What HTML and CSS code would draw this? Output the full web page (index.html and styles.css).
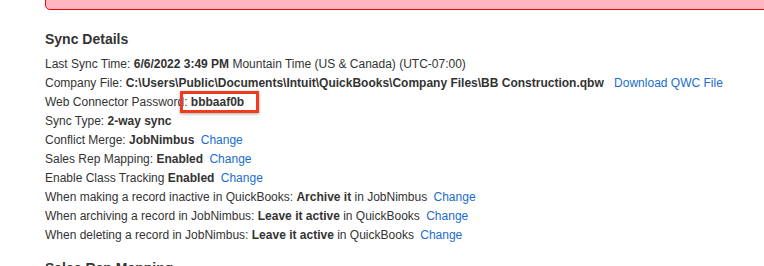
FILE: index.html
```html
<!DOCTYPE html>
<html lang="en">
<head>
  <meta charset="UTF-8">
  <title>QuickBooks Sync</title>
  <link rel="stylesheet" href="styles.css">
</head>
<body>
  <div class="page">

    <!-- error banner (scrolled mostly out of view) -->
    <div class="alert"></div>

    <div class="section">
      <h3>Sync Details</h3>
      <div class="row">Last Sync Time: <b>6/6/2022 3:49 PM</b> Mountain Time (US &amp; Canada) (UTC-07:00)</div>
      <div class="row">Company File: <b>C:\Users\Public\Documents\Intuit\QuickBooks\Company Files\BB Construction.qbw</b> <a href="#" class="link wide">Download QWC File</a></div>
      <div class="row">Web Connector Password<span class="marked">: <b>bbbaaf0b</b><span class="callout"></span></span></div>
      <div class="row">Sync Type: <b>2-way sync</b></div>
      <div class="row">Conflict Merge: <b>JobNimbus</b> <a href="#" class="link">Change</a></div>
      <div class="row">Sales Rep Mapping: <b>Enabled</b> <a href="#" class="link">Change</a></div>
      <div class="row">Enable Class Tracking <b>Enabled</b> <a href="#" class="link">Change</a></div>
      <div class="row">When making a record inactive in QuickBooks: <b>Archive it</b> in JobNimbus <a href="#" class="link">Change</a></div>
      <div class="row">When archiving a record in JobNimbus: <b>Leave it active</b> in QuickBooks <a href="#" class="link">Change</a></div>
      <div class="row">When deleting a record in JobNimbus: <b>Leave it active</b> in QuickBooks <a href="#" class="link">Change</a></div>
    </div>

    <div class="section">
      <h3>Sales Rep Mapping</h3>
    </div>

  </div>
</body>
</html>
```

FILE: styles.css
```css
/* Reset + base */
* { margin:0; padding:0; box-sizing:border-box; }
html, body { height:100%; overflow:hidden; }
body {
  background:#fff;
  color:#333;
  font-family:"Liberation Sans", Arial, Helvetica, sans-serif;
  font-size:12px;
}

.page { padding-left:45px; }

/* Error banner */
.alert {
  height:30px;
  margin-top:-20px;
  margin-right:-20px;
  background:#ffb6c1;
  border:1.5px solid #f00;
  border-radius:5px;
}

/* Sections */
.section { margin-top:21px; }
.section + .section { margin-top:15px; }
.section h3 {
  font-size:14px;
  font-weight:bold;
  line-height:17px;
  color:#333;
  margin-bottom:7px;
}

.row { line-height:19px; white-space:nowrap; }
.row b { font-weight:bold; }

.link { color:#1a6dcc; text-decoration:none; margin-left:3px; }
.link.wide { margin-left:7px; }

/* Screenshot annotation round the password */
.marked { position:relative; }
.callout {
  position:absolute;
  left:-4px; right:-15px;
  top:-4px; bottom:-4px;
  border:3px solid #f23a1d;
  box-shadow:0 1px 3px rgba(0,0,0,0.35);
  pointer-events:none;
}
```
